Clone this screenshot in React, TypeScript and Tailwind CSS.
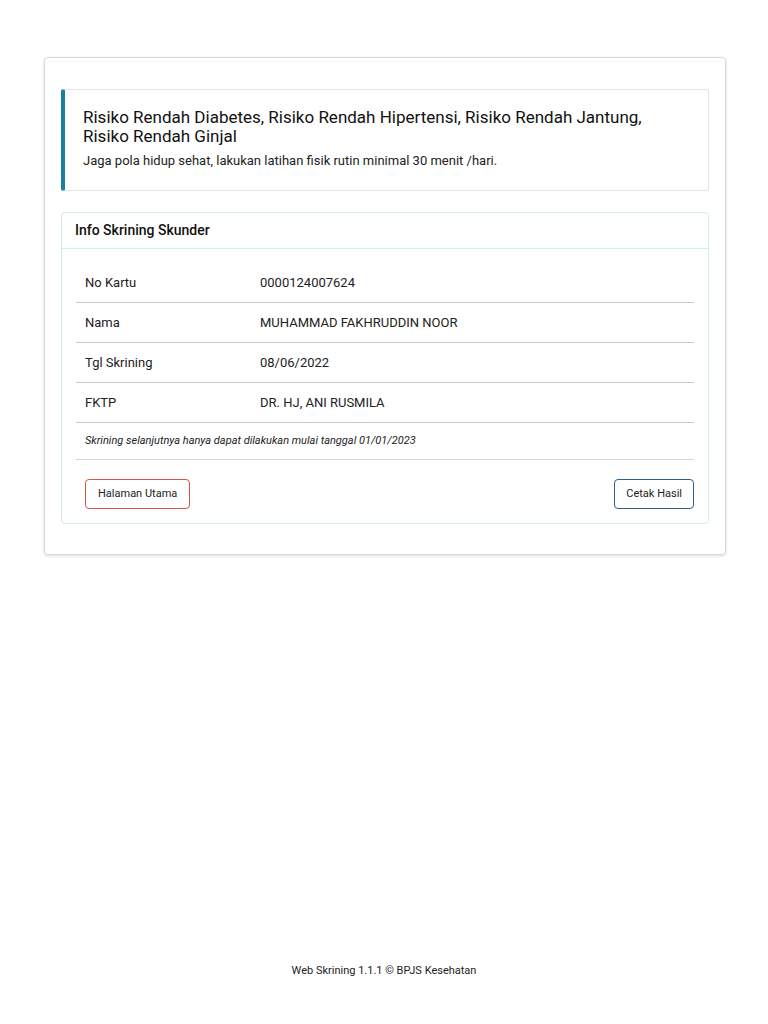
import React from "react";

const rows = [
  { label: "No Kartu", value: "0000124007624" },
  { label: "Nama", value: "MUHAMMAD FAKHRUDDIN NOOR" },
  { label: "Tgl Skrining", value: "08/06/2022" },
  { label: "FKTP", value: "DR. HJ, ANI RUSMILA" },
];

export default function App() {
  return (
    <div className="min-h-[1024px] flex flex-col bg-white text-[#212529] font-['Roboto',sans-serif]">
      <div className="pl-[44px] pr-[42px] pt-[57px]">
        <div className="rounded-[4px] border border-[#d9d9d9] shadow-[0_1px_3px_rgba(0,0,0,0.15)] px-[16px] pt-[31px] pb-[30px]">
          <div className="border border-[#e3e6ea] border-l-[4px] border-l-[#1b80a0] rounded-[2px] pl-[18px] pr-4 pt-[18px] pb-[20px]">
            <h4 className="text-[17px] leading-[19px] text-[#111]">
              Risiko Rendah Diabetes, Risiko Rendah Hipertensi, Risiko Rendah Jantung,
              <br />
              Risiko Rendah Ginjal
            </h4>
            <p className="mt-[6px] text-[13px] leading-[18px] text-[#222]">
              Jaga pola hidup sehat, lakukan latihan fisik rutin minimal 30 menit /hari.
            </p>
          </div>

          <div className="mt-[21px] rounded-[4px] border border-[#d3ecf3]">
            <div className="h-[36px] flex items-center px-[13px] border-b border-[#d3ecf3] text-[14px] font-medium text-[#111]">
              Info Skrining Skunder
            </div>
            <div className="px-[14px] pt-[14px] pb-[14px]">
              {rows.map((r) => (
                <div
                  key={r.label}
                  className="flex items-center h-[40px] border-b border-[#c8c8c8] text-[13px] text-[#222]"
                >
                  <div className="w-[184px] pl-[9px]">{r.label}</div>
                  <div>{r.value}</div>
                </div>
              ))}
              <div className="flex items-center h-[37px] border-b border-[#d6d6d6] pl-[9px] text-[11px] italic text-[#222]">
                Skrining selanjutnya hanya dapat dilakukan mulai tanggal 01/01/2023
              </div>
              <div className="flex justify-between items-center pt-[19px] pl-[9px]">
                <button className="h-[30px] px-[12px] rounded-[4px] border border-[#d9534f] bg-white text-[11px] text-[#222]">
                  Halaman Utama
                </button>
                <button className="h-[30px] px-[11px] rounded-[4px] border border-[#2c5f8a] bg-white text-[11px] text-[#222]">
                  Cetak Hasil
                </button>
              </div>
            </div>
          </div>
        </div>
      </div>
      <div className="flex-1" />
      <footer className="text-center text-[11px] text-[#222] pb-[45px]">
        Web Skrining 1.1.1 © BPJS Kesehatan
      </footer>
    </div>
  );
}
